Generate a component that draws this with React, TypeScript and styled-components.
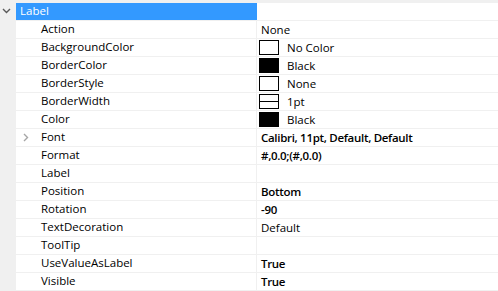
import React from "react";
import styled, { createGlobalStyle } from "styled-components";

type Swatch = "white" | "black" | "line";

interface Prop {
  name: string;
  value?: string;
  bold?: boolean;
  swatch?: Swatch;
  expandable?: boolean;
}

const props: Prop[] = [
  { name: "Action", value: "None" },
  { name: "BackgroundColor", value: "No Color", swatch: "white" },
  { name: "BorderColor", value: "Black", swatch: "black" },
  { name: "BorderStyle", value: "None", swatch: "white" },
  { name: "BorderWidth", value: "1pt", swatch: "line" },
  { name: "Color", value: "Black", swatch: "black" },
  { name: "Font", value: "Calibri, 11pt, Default, Default", bold: true, expandable: true },
  { name: "Format", value: "#,0.0;(#,0.0)", bold: true },
  { name: "Label" },
  { name: "Position", value: "Bottom", bold: true },
  { name: "Rotation", value: "-90", bold: true },
  { name: "TextDecoration", value: "Default" },
  { name: "ToolTip" },
  { name: "UseValueAsLabel", value: "True", bold: true },
  { name: "Visible", value: "True", bold: true },
];

const GlobalStyle = createGlobalStyle`
  body {
    margin: 0;
    background: #ffffff;
    font-family: "Open Sans", "Noto Sans", sans-serif;
    font-size: 11.5px;
    color: #000000;
  }
`;

const App: React.FC = () => {
  return (
    <>
      <GlobalStyle />
      <Grid>
        <TopStrip />
        <Row>
          <Gutter>
            <svg width="9" height="6" viewBox="0 0 9 6">
              <path d="M1 1 L4.5 4.5 L8 1" fill="none" stroke="#5a5a5a" strokeWidth="1.4" />
            </svg>
          </Gutter>
          <CategoryCell>Label</CategoryCell>
          <ValueCell />
        </Row>
        {props.map((p) => (
          <Row key={p.name}>
            <Gutter />
            <NameCell>
              {p.expandable && (
                <Expander width="6" height="9" viewBox="0 0 6 9">
                  <path d="M1 1 L4.5 4.5 L1 8" fill="none" stroke="#a6a6a6" strokeWidth="1.4" />
                </Expander>
              )}
              {p.name}
            </NameCell>
            <ValueCell $bold={p.bold}>
              {p.swatch && <ColorBox $kind={p.swatch} />}
              {p.value}
            </ValueCell>
          </Row>
        ))}
      </Grid>
    </>
  );
};

const Grid = styled.div`
  width: 498px;
  display: flex;
  flex-direction: column;
`;

const TopStrip = styled.div`
  height: 3px;
  background: #f0f0f0;
`;

const Row = styled.div`
  display: grid;
  grid-template-columns: 16px 241px 1fr;
  height: 18px;
`;

const Gutter = styled.div`
  background: #f0f0f0;
  display: flex;
  align-items: center;
  justify-content: center;
  padding-right: 4px;
  svg {
    margin-top: -2px;
  }
`;

const CategoryCell = styled.div`
  background: #3399ff;
  color: #ffffff;
  padding-left: 4px;
  height: 17px;
  line-height: 16px;
  border-bottom: 1px solid #f0f0f0;
`;

const NameCell = styled.div`
  position: relative;
  padding-left: 25px;
  height: 17px;
  line-height: 16px;
  border-bottom: 1px solid #f0f0f0;
  border-right: 1px solid #f0f0f0;
  white-space: nowrap;
  color: #000000;
`;

const Expander = styled.svg`
  position: absolute;
  left: 7px;
  top: 4px;
`;

const ValueCell = styled.div<{ $bold?: boolean }>`
  display: flex;
  align-items: center;
  padding-left: 4px;
  height: 17px;
  line-height: 16px;
  border-bottom: 1px solid #f0f0f0;
  font-weight: ${(p) => (p.$bold ? 600 : 400)};
  letter-spacing: ${(p) => (p.$bold ? "-0.3px" : "0")};
  white-space: nowrap;
`;

const ColorBox = styled.span<{ $kind: Swatch }>`
  box-sizing: border-box;
  width: 20px;
  height: 15px;
  margin-left: -2px;
  margin-right: 8px;
  border: 1px solid #000000;
  background: ${(p) =>
    p.$kind === "black"
      ? "#000000"
      : p.$kind === "line"
      ? "linear-gradient(#fff 0 6px, #000 6px 7px, #fff 7px)"
      : "#ffffff"};
`;

export default App;
